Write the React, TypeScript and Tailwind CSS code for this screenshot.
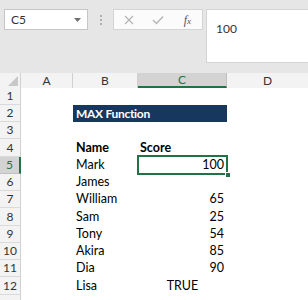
import React from "react";

const font = { fontFamily: "Lato, 'Liberation Sans', sans-serif" };

type Row = {
  n: number;
  h: string;
  b?: React.ReactNode;
  c?: React.ReactNode;
  kind?: "title" | "sel" | "center";
};

const rows: Row[] = [
  { n: 1, h: "h-[17px]" },
  { n: 2, h: "h-[17px]", kind: "title" },
  { n: 3, h: "h-[17px]" },
  { n: 4, h: "h-[18px]", b: <span className="font-bold">Name</span>, c: <span className="font-bold">Score</span> },
  { n: 5, h: "h-[17px]", b: "Mark", c: "100", kind: "sel" },
  { n: 6, h: "h-[17px]", b: "James" },
  { n: 7, h: "h-[17px]", b: "William", c: "65" },
  { n: 8, h: "h-[18px]", b: "Sam", c: "25" },
  { n: 9, h: "h-[17px]", b: "Tony", c: "54" },
  { n: 10, h: "h-[17px]", b: "Akira", c: "85" },
  { n: 11, h: "h-[17px]", b: "Dia", c: "90" },
  { n: 12, h: "h-[18px]", b: "Lisa", c: "TRUE", kind: "center" },
  { n: 13, h: "h-[17px]" },
];

export default function App() {
  return (
    <div className="w-[308px] h-[300px] overflow-hidden bg-white text-black" style={font}>
      {/* formula bar area */}
      <div className="h-[73px] bg-[#e6e6e6] flex items-start pt-[9px] pl-[4px]">
        <div className="w-[84px] h-[21px] bg-white border border-[#c6c6c6] flex items-center justify-between pl-[6px] pr-[6px]">
          <span className="text-[12px] text-[#333] leading-none">C5</span>
          <svg width="7" height="4" viewBox="0 0 7 4">
            <path d="M0 0 L7 0 L3.5 4 Z" fill="#707070" />
          </svg>
        </div>
        <div className="w-[25px] h-[21px] flex flex-col items-center justify-center gap-[2px]">
          <span className="w-[2px] h-[2px] bg-[#b0b0b0]" />
          <span className="w-[2px] h-[2px] bg-[#b0b0b0]" />
          <span className="w-[2px] h-[2px] bg-[#b0b0b0]" />
        </div>
        <div className="w-[90px] h-[21px] bg-[#fbfbfb] border border-[#d4d4d4] flex items-center">
          <div className="w-[30px] flex justify-center">
            <svg width="10" height="10" viewBox="0 0 10 10">
              <path d="M1 1 L9 9 M9 1 L1 9" stroke="#b4b4b4" strokeWidth="1.2" fill="none" />
            </svg>
          </div>
          <div className="w-[30px] flex justify-center">
            <svg width="12" height="10" viewBox="0 0 12 10">
              <path d="M1 5 L4.5 8.5 L11 1.5" stroke="#b4b4b4" strokeWidth="1.3" fill="none" />
            </svg>
          </div>
          <div className="w-[30px] flex justify-center">
            <span className="text-[12px] italic text-[#555] leading-none" style={{ fontFamily: "'Liberation Serif', serif" }}>
              f<span className="text-[9px]">x</span>
            </span>
          </div>
        </div>
        <div className="ml-[3px] flex-1 h-[54px] bg-white border border-[#d4d4d4] border-r-0 pl-[9px] pt-[5px]">
          <span className="text-[12px] text-[#333]">100</span>
        </div>
      </div>

      {/* column headers */}
      <div className="flex h-[15px] bg-[#f3f3f3] text-[12px] text-[#333] leading-none">
        <div className="w-[21px] border-r border-[#d0d0d0] relative">
          <svg className="absolute right-[2px] bottom-[2px]" width="10" height="10" viewBox="0 0 10 10">
            <path d="M10 0 L10 10 L0 10 Z" fill="#c8c8c8" />
          </svg>
        </div>
        <div className="w-[52px] border-r border-[#d0d0d0] flex items-center justify-center">A</div>
        <div className="w-[65px] border-r border-[#d0d0d0] flex items-center justify-center">B</div>
        <div className="w-[89px] bg-[#d3d3d3] border-b-2 border-[#217346] border-r border-r-[#c0c0c0] flex items-center justify-center text-[#217346]">C</div>
        <div className="flex-1 flex items-center justify-center">D</div>
      </div>

      {/* rows */}
      {rows.map((r) => (
        <div key={r.n} className={`flex ${r.h}`}>
          <div
            className={
              r.kind === "sel"
                ? "w-[21px] bg-[#d3d3d3] border-r-2 border-[#217346] border-b border-b-[#c0c0c0] flex items-center justify-center text-[12px] text-[#217346]"
                : "w-[21px] bg-[#f3f3f3] border-r border-[#d0d0d0] border-b border-b-[#dadada] flex items-center justify-center text-[12px] text-[#333]"
            }
          >
            {r.n < 13 ? r.n : null}
          </div>
          <div className="w-[52px]" />
          {r.kind === "title" ? (
            <div className="w-[154px] bg-[#17375e] text-white font-bold text-[12px] tracking-[-0.3px] flex items-center pl-[3px]">
              MAX Function
            </div>
          ) : (
            <>
              <div className="w-[65px] text-[12.5px] flex items-center pl-[3px]">{r.b}</div>
              <div
                className={
                  r.kind === "center"
                    ? "w-[89px] text-[12.5px] flex items-center justify-center"
                    : r.kind === "sel"
                    ? "w-[89px] text-[12.5px] flex items-center justify-end pr-[3px] relative"
                    : typeof r.c === "string"
                    ? "w-[89px] text-[12.5px] flex items-center justify-end pr-[3px]"
                    : "w-[89px] text-[12.5px] flex items-center pl-[2px]"
                }
              >
                {r.c}
                {r.kind === "sel" && (
                  <>
                    <div className="absolute -left-[1px] -top-[2px] -right-[1px] -bottom-[1px] border-2 border-[#217346]" />
                    <div className="absolute -right-[4px] -bottom-[4px] w-[6px] h-[6px] bg-[#217346] border border-white" />
                  </>
                )}
              </div>
            </>
          )}
          <div className="flex-1" />
        </div>
      ))}
    </div>
  );
}
